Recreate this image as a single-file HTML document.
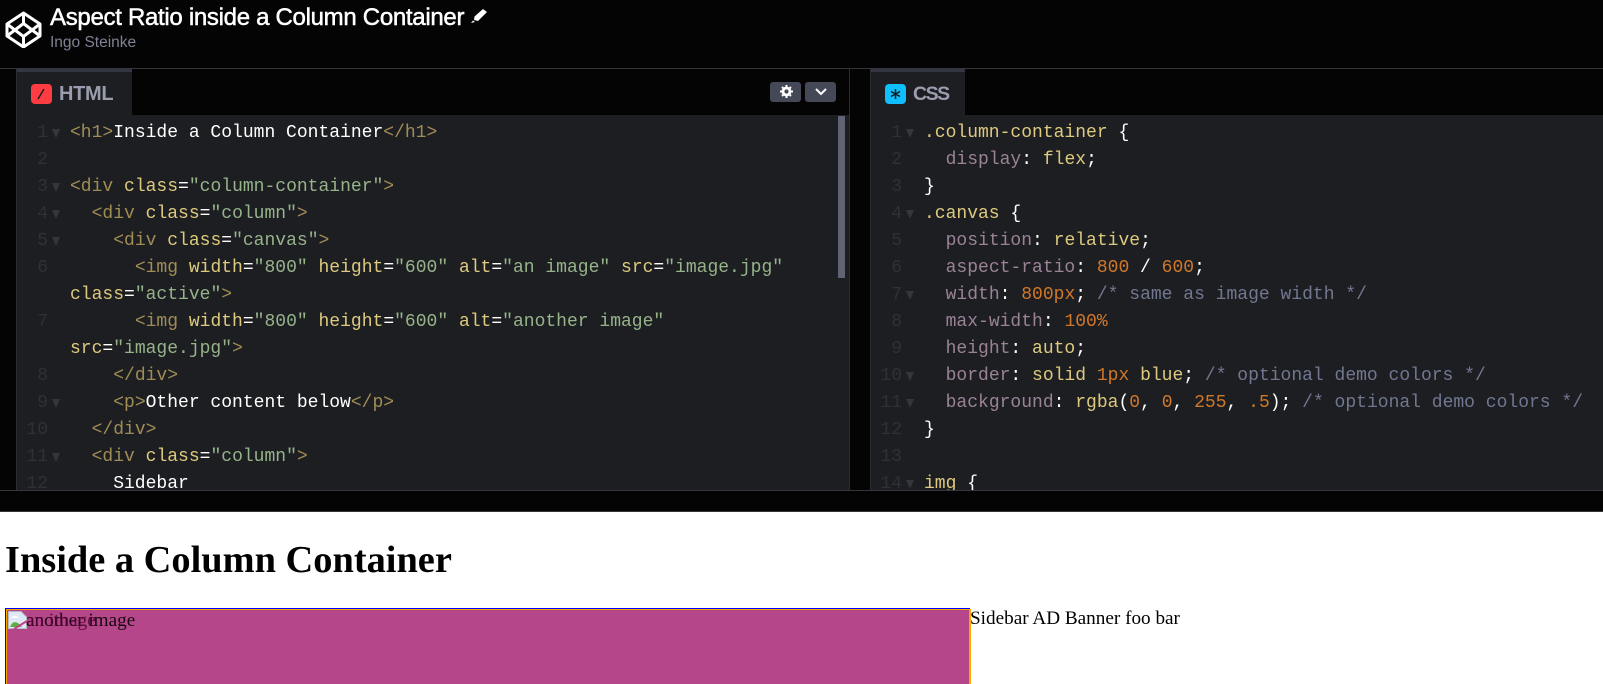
<!DOCTYPE html>
<html><head><meta charset="utf-8"><style>
html,body{margin:0;padding:0;background:#fff;width:1603px;height:684px;overflow:hidden}
.abs{position:absolute}
#top{position:absolute;left:0;top:0;width:1603px;height:512px;background:#040404}
.ln{position:absolute;left:0;top:68px;width:1603px;height:1px;background:#34363c}
.panel{position:absolute;top:69px;height:421px;background:#040404;border-left:1px solid #2c2d33;border-right:1px solid #2c2d33}
.tab{position:absolute;left:0;top:0;height:43px;background:#1d1e22;border-top:3px solid #333642}
.ed{position:absolute;left:0;top:46px;right:0;height:375px;background:#1d1e22;overflow:hidden}
.tt{position:absolute;top:14px;font:bold 20px "Liberation Sans",sans-serif;color:#9a9dad;letter-spacing:-.3px}
.ico{position:absolute;left:14px;top:15px;width:21px;height:20px;border-radius:4px}
.c,.g{position:absolute;font:18px/27px "Liberation Mono",monospace;white-space:pre;color:#fff}
.g{color:#2f3138;text-align:right;width:31px;left:0}
.f{position:absolute;left:35px;width:0;height:0;border-left:4.5px solid transparent;border-right:4.5px solid transparent;border-top:9px solid #34363e}
.t{color:#a08c55}.a{color:#ddca7e}.v{color:#96b38a}.p{color:#9a8297}.n{color:#d0782a}.m{color:#717790}
</style></head><body>
<div id="top"></div>
<div class="ln"></div>
<svg class="abs" style="left:5px;top:11px" width="37" height="37" viewBox="0 0 37 37" fill="none" stroke="#fff" stroke-width="3" stroke-linejoin="round"><path d="M18.5 2 35 13V25L18.5 36 2 25V13Z"/><path d="M18.5 2V12.5M18.5 25.500V36M2 13 18.500 25.500 35 13M2 25 18.500 12.500 35 25"/></svg>
<div class="abs" style="left:50px;top:2px;font:24px/32px 'Liberation Sans',sans-serif;color:#fff;white-space:nowrap;-webkit-text-stroke:.5px #fff;letter-spacing:-.3px">Aspect Ratio inside a Column Container</div>
<svg class="abs" style="left:470px;top:8px" width="18" height="16" viewBox="0 0 18 16"><path d="M13 1 17 4 8 13 4 12 4.500 8.500ZM3 12.500 1 15 5 14Z" fill="#fff"/></svg>
<div class="abs" style="left:50px;top:32px;font:15.500px/22px 'Liberation Sans',sans-serif;color:#7f8294;white-space:nowrap">Ingo Steinke</div>

<div class="panel" style="left:16px;width:832px">
 <div class="tab" style="width:115px"></div>
 <div class="ico" style="background:#ff3c41"><svg width="21" height="20"><path d="M7 15 13 5" stroke="#1d1e22" stroke-width="1.500"/></svg></div>
 <div class="tt" style="left:42px">HTML</div>
 <div class="abs" style="left:753px;top:13px;width:31px;height:20px;border-radius:3px;background:#444857"></div>
 <svg class="abs" style="left:763px;top:16px" width="13" height="13" viewBox="0 0 13 13"><circle cx="6.500" cy="6.500" r="3.500" fill="none" stroke="#fff" stroke-width="2.800"/><path d="M6.500 0V13M0 6.500H13M2 2 11 11M11 2 2 11" stroke="#fff" stroke-width="2" stroke-dasharray="2 9"/></svg>
 <div class="abs" style="left:788px;top:13px;width:31px;height:20px;border-radius:3px;background:#444857"></div>
 <svg class="abs" style="left:797px;top:18px" width="14" height="10"><path d="M2 2 7 7 12 2" fill="none" stroke="#fff" stroke-width="2"/></svg>
 <div class="ed">
  <div class="abs" style="left:821px;top:1px;width:7px;height:162px;background:#5f6373"></div>
  <div class="g" style="top:5px">1
2
3
4
5
6

7

8
9
10
11
12</div>
  <div class="f" style="top:14px"></div><div class="f" style="top:68px"></div><div class="f" style="top:95px"></div><div class="f" style="top:122px"></div><div class="f" style="top:284px"></div><div class="f" style="top:338px"></div>
  <div class="c" style="left:53px;top:5px"><span class="t">&lt;h1&gt;</span>Inside a Column Container<span class="t">&lt;/h1&gt;</span>

<span class="t">&lt;div</span> <span class="a">class</span>=<span class="v">"column-container"</span><span class="t">&gt;</span>
  <span class="t">&lt;div</span> <span class="a">class</span>=<span class="v">"column"</span><span class="t">&gt;</span>
    <span class="t">&lt;div</span> <span class="a">class</span>=<span class="v">"canvas"</span><span class="t">&gt;</span>
      <span class="t">&lt;img</span> <span class="a">width</span>=<span class="v">"800"</span> <span class="a">height</span>=<span class="v">"600"</span> <span class="a">alt</span>=<span class="v">"an image"</span> <span class="a">src</span>=<span class="v">"image.jpg"</span>
<span class="a">class</span>=<span class="v">"active"</span><span class="t">&gt;</span>
      <span class="t">&lt;img</span> <span class="a">width</span>=<span class="v">"800"</span> <span class="a">height</span>=<span class="v">"600"</span> <span class="a">alt</span>=<span class="v">"another image"</span>
<span class="a">src</span>=<span class="v">"image.jpg"</span><span class="t">&gt;</span>
    <span class="t">&lt;/div&gt;</span>
    <span class="t">&lt;p&gt;</span>Other content below<span class="t">&lt;/p&gt;</span>
  <span class="t">&lt;/div&gt;</span>
  <span class="t">&lt;div</span> <span class="a">class</span>=<span class="v">"column"</span><span class="t">&gt;</span>
    Sidebar</div>
 </div>
</div>

<div class="panel" style="left:870px;width:733px;border-right:0">
 <div class="tab" style="width:94px"></div>
 <div class="ico" style="background:#0ebeff"><svg width="21" height="20"><path d="M10.500 5V15M6 7.500 15 12.500M15 7.500 6 12.500" stroke="#1d1e22" stroke-width="1.500"/></svg></div>
 <div class="tt" style="left:42px;font-size:19.500px;letter-spacing:-1.500px">CSS</div>
 <div class="ed">
  <div class="g" style="top:5px">1
2
3
4
5
6
7
8
9
10
11
12
13
14</div>
  <div class="f" style="top:14px"></div><div class="f" style="top:95px"></div><div class="f" style="top:176px"></div><div class="f" style="top:257px"></div><div class="f" style="top:284px"></div><div class="f" style="top:365px"></div>
  <div class="c" style="left:53px;top:5px"><span class="a">.column-container</span> {
  <span class="p">display</span>: <span class="a">flex</span>;
}
<span class="a">.canvas</span> {
  <span class="p">position</span>: <span class="a">relative</span>;
  <span class="p">aspect-ratio</span>: <span class="n">800</span> / <span class="n">600</span>;
  <span class="p">width</span>: <span class="n">800px</span>; <span class="m">/* same as image width */</span>
  <span class="p">max-width</span>: <span class="n">100%</span>
  <span class="p">height</span>: <span class="a">auto</span>;
  <span class="p">border</span>: <span class="a">solid</span> <span class="n">1px</span> <span class="a">blue</span>; <span class="m">/* optional demo colors */</span>
  <span class="p">background</span>: <span class="a">rgba</span>(<span class="n">0</span>, <span class="n">0</span>, <span class="n">255</span>, <span class="n">.5</span>); <span class="m">/* optional demo colors */</span>
}

<span class="a">img</span> {</div>
 </div>
</div>
<div class="abs" style="left:0;top:490px;width:1603px;height:1px;background:#34363c"></div>

<div class="abs" style="left:0;top:511px;width:1603px;height:1px;background:#34363c"></div>
<div class="abs" style="left:5px;top:538px;font:bold 38.400px/44px 'Liberation Serif',serif;color:#000;white-space:nowrap">Inside a Column Container</div>
<div class="abs" style="left:5px;top:608px;width:965px;height:76px;background:#00f"></div>
<div class="abs" style="left:6px;top:609px;width:965px;height:75px;background:orange"></div>
<div class="abs" style="left:7px;top:610px;width:962px;height:74px;background:#b54689"></div>
<svg class="abs" style="left:8px;top:611px" width="19" height="18" viewBox="0 0 19 18"><path d="M.500.500H13L18.500 6V17.500H.500Z" fill="#dfe8f5" stroke="#b5bcc5"/><path d="M2 16C5 9 9 10 14 16Z" fill="#5fae45"/><path d="M3 7C5 4 9 4 11 7Z" fill="#fff"/><path d="M6 18 19 10" stroke="#c0408a" stroke-width="2"/></svg>
<div class="abs" style="left:26px;top:609px;font:19.200px/24px 'Liberation Serif',serif;color:#1a0512;white-space:nowrap">another image</div>
<div class="abs" style="left:26px;top:609px;font:19.200px/24px 'Liberation Serif',serif;color:rgba(80,5,50,.85);white-space:nowrap">an image</div>
<div class="abs" style="left:970px;top:607px;font:19.200px/24px 'Liberation Serif',serif;color:#000;white-space:nowrap">Sidebar AD Banner foo bar</div>
</body></html>
